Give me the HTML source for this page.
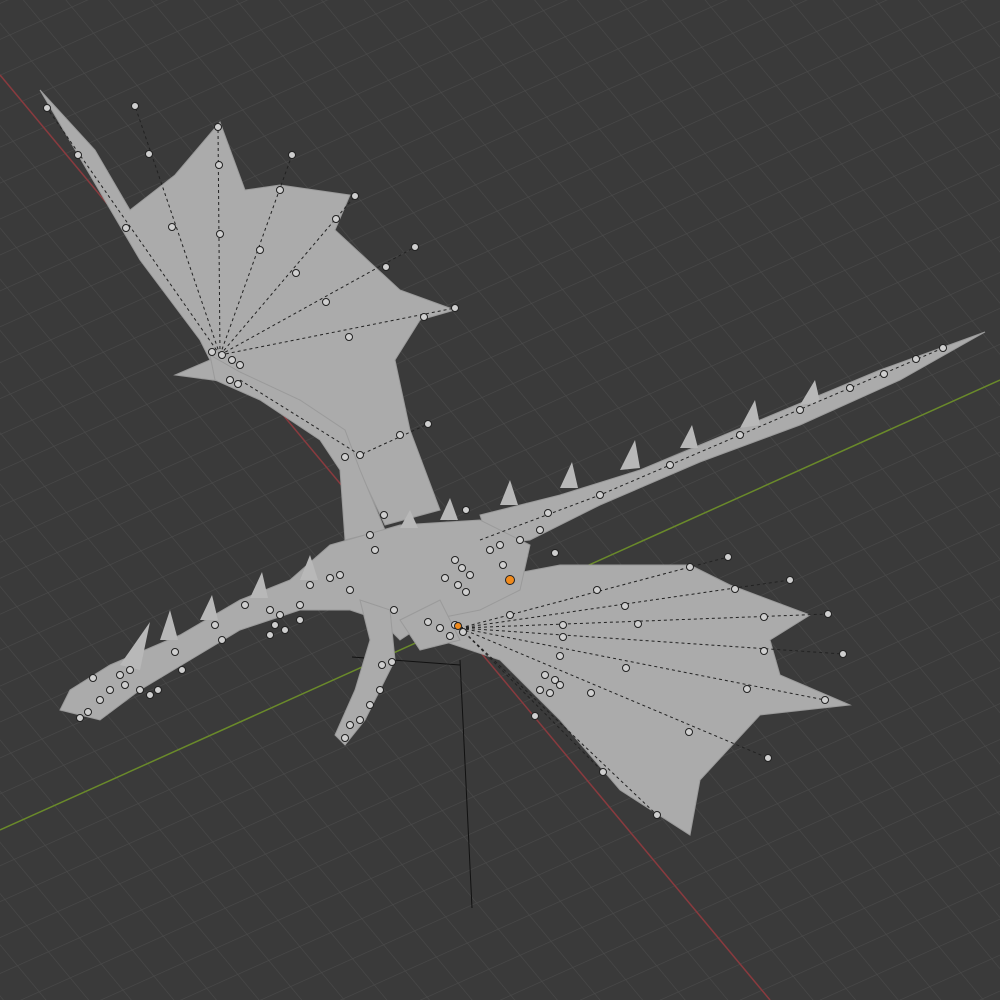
<!DOCTYPE html>
<html><head><meta charset="utf-8"><style>
html,body{margin:0;padding:0;background:#3a3a3a;width:1000px;height:1000px;overflow:hidden}
</style></head><body>
<svg width="1000" height="1000" viewBox="0 0 1000 1000" xmlns="http://www.w3.org/2000/svg">
<defs>
<pattern id="g" width="34" height="34" patternUnits="userSpaceOnUse" patternTransform="matrix(0.912,-0.41,0.64,0.769,457,624)">
<path d="M0 0H34M0 0V34" stroke="#4a4a4a" stroke-width="1.3" fill="none"/>
</pattern>
</defs>
<rect width="1000" height="1000" fill="#3a3a3a"/>
<rect width="1000" height="1000" fill="url(#g)"/>
<line x1="0" y1="75" x2="770" y2="1000" stroke="#8a3a3e" stroke-width="1.5"/>
<line x1="0" y1="830" x2="1000" y2="380" stroke="#6a8a2a" stroke-width="1.5"/>
<line x1="460" y1="660" x2="472" y2="908" stroke="#111" stroke-width="1"/>
<line x1="352" y1="657" x2="460" y2="665" stroke="#111" stroke-width="1"/>
<g fill="#ababab" stroke="#9a9a9a" stroke-width="1">
<polygon points="40,90 95,150 130,210 175,175 220,122 245,190 280,185 350,195 335,230 400,290 455,310 420,320 395,360 410,430 440,510 385,525 345,440 300,400 250,385 175,375 210,360 200,340 140,260"/>
<polygon points="210,355 240,372 300,400 345,430 360,470 385,530 345,540 340,470 320,440 260,400 215,380"/>
<polygon points="430,615 480,580 560,565 690,565 730,585 810,615 770,640 780,675 850,705 760,715 700,780 690,835 620,790 560,720 500,660 440,640"/>
<polygon points="480,515 560,495 640,470 760,420 880,370 985,332 900,380 800,425 700,462 600,505 530,540 490,545"/>
<polygon points="330,545 400,525 480,520 530,545 520,590 480,610 430,620 400,640 380,620 350,610 300,610 240,630 190,660 140,690 100,720 60,710 70,690 110,665 180,635 240,600 290,580"/>
<polygon points="360,600 390,610 395,660 365,720 345,745 335,735 355,690 370,640"/>
<polygon points="400,620 440,600 460,640 420,650"/>
</g>
<g fill="#b8b8b8">
<polygon points="400,528 410,510 418,528"/><polygon points="440,520 450,498 458,520"/><polygon points="500,505 510,480 518,505"/><polygon points="560,488 572,462 578,488"/><polygon points="620,470 635,440 640,468"/><polygon points="680,448 692,425 698,448"/><polygon points="740,428 755,400 760,425"/><polygon points="800,405 815,380 820,402"/>
<polygon points="160,640 170,610 178,640"/><polygon points="200,620 212,595 218,620"/><polygon points="250,598 262,572 268,598"/><polygon points="300,580 310,555 318,580"/><polygon points="120,665 150,622 140,670"/>
</g>
<g stroke="#222" stroke-width="1" stroke-dasharray="3,3" fill="none">
<path d="M220,355 L47,108 M220,355 L135,106 M220,355 L218,127 M220,355 L292,155 M220,355 L355,196 M220,355 L415,247 M220,355 L455,308 M240,380 L360,455 L428,424"/>
<path d="M460,628 L690,567 M460,628 L728,557 M460,628 L790,580 M460,628 L828,614 M460,628 L843,654 M460,628 L825,700 M460,628 L768,758 M460,628 L657,815 M460,628 L603,772"/>
<path d="M480,540 L600,495 L740,435 L850,388 L943,348"/>
</g>
<g fill="#cfcfcf" stroke="#222" stroke-width="1">
<circle cx="47" cy="108" r="3.5"/><circle cx="78" cy="155" r="3.5"/><circle cx="126" cy="228" r="3.5"/><circle cx="135" cy="106" r="3.5"/><circle cx="149" cy="154" r="3.5"/><circle cx="172" cy="227" r="3.5"/><circle cx="218" cy="127" r="3.5"/><circle cx="219" cy="165" r="3.5"/><circle cx="220" cy="234" r="3.5"/><circle cx="292" cy="155" r="3.5"/><circle cx="280" cy="190" r="3.5"/><circle cx="260" cy="250" r="3.5"/><circle cx="355" cy="196" r="3.5"/><circle cx="336" cy="219" r="3.5"/><circle cx="296" cy="273" r="3.5"/><circle cx="415" cy="247" r="3.5"/><circle cx="386" cy="267" r="3.5"/><circle cx="326" cy="302" r="3.5"/><circle cx="455" cy="308" r="3.5"/><circle cx="424" cy="317" r="3.5"/><circle cx="349" cy="337" r="3.5"/><circle cx="212" cy="352" r="3.5"/><circle cx="222" cy="355" r="3.5"/><circle cx="232" cy="360" r="3.5"/><circle cx="240" cy="365" r="3.5"/><circle cx="230" cy="380" r="3.5"/><circle cx="238" cy="384" r="3.5"/><circle cx="428" cy="424" r="3.5"/><circle cx="400" cy="435" r="3.5"/><circle cx="360" cy="455" r="3.5"/><circle cx="345" cy="457" r="3.5"/>
<circle cx="943" cy="348" r="3.5"/><circle cx="916" cy="359" r="3.5"/><circle cx="884" cy="374" r="3.5"/><circle cx="850" cy="388" r="3.5"/><circle cx="800" cy="410" r="3.5"/><circle cx="740" cy="435" r="3.5"/><circle cx="670" cy="465" r="3.5"/><circle cx="600" cy="495" r="3.5"/><circle cx="548" cy="513" r="3.5"/><circle cx="540" cy="530" r="3.5"/><circle cx="466" cy="510" r="3.5"/><circle cx="384" cy="515" r="3.5"/><circle cx="370" cy="535" r="3.5"/><circle cx="375" cy="550" r="3.5"/>
<circle cx="455" cy="560" r="3.5"/><circle cx="462" cy="568" r="3.5"/><circle cx="470" cy="575" r="3.5"/><circle cx="445" cy="578" r="3.5"/><circle cx="458" cy="585" r="3.5"/><circle cx="466" cy="592" r="3.5"/><circle cx="490" cy="550" r="3.5"/><circle cx="500" cy="545" r="3.5"/><circle cx="503" cy="565" r="3.5"/><circle cx="520" cy="540" r="3.5"/><circle cx="555" cy="553" r="3.5"/>
<circle cx="690" cy="567" r="3.5"/><circle cx="728" cy="557" r="3.5"/><circle cx="790" cy="580" r="3.5"/><circle cx="735" cy="589" r="3.5"/><circle cx="828" cy="614" r="3.5"/><circle cx="764" cy="617" r="3.5"/><circle cx="843" cy="654" r="3.5"/><circle cx="764" cy="651" r="3.5"/><circle cx="825" cy="700" r="3.5"/><circle cx="747" cy="689" r="3.5"/><circle cx="768" cy="758" r="3.5"/><circle cx="689" cy="732" r="3.5"/><circle cx="657" cy="815" r="3.5"/><circle cx="603" cy="772" r="3.5"/><circle cx="535" cy="716" r="3.5"/><circle cx="597" cy="590" r="3.5"/><circle cx="625" cy="606" r="3.5"/><circle cx="638" cy="624" r="3.5"/><circle cx="563" cy="625" r="3.5"/><circle cx="563" cy="637" r="3.5"/><circle cx="560" cy="656" r="3.5"/><circle cx="626" cy="668" r="3.5"/><circle cx="591" cy="693" r="3.5"/><circle cx="510" cy="615" r="3.5"/>
<circle cx="545" cy="675" r="3.5"/><circle cx="555" cy="680" r="3.5"/><circle cx="540" cy="690" r="3.5"/><circle cx="550" cy="693" r="3.5"/><circle cx="560" cy="685" r="3.5"/>
<circle cx="440" cy="628" r="3.5"/><circle cx="450" cy="636" r="3.5"/><circle cx="455" cy="625" r="3.5"/><circle cx="463" cy="632" r="3.5"/><circle cx="428" cy="622" r="3.5"/>
<circle cx="270" cy="610" r="3.5"/><circle cx="280" cy="615" r="3.5"/><circle cx="275" cy="625" r="3.5"/><circle cx="285" cy="630" r="3.5"/><circle cx="270" cy="635" r="3.5"/><circle cx="300" cy="605" r="3.5"/><circle cx="300" cy="620" r="3.5"/><circle cx="245" cy="605" r="3.5"/><circle cx="215" cy="625" r="3.5"/><circle cx="222" cy="640" r="3.5"/><circle cx="175" cy="652" r="3.5"/><circle cx="182" cy="670" r="3.5"/><circle cx="310" cy="585" r="3.5"/><circle cx="330" cy="578" r="3.5"/><circle cx="340" cy="575" r="3.5"/><circle cx="350" cy="590" r="3.5"/><circle cx="394" cy="610" r="3.5"/>
<circle cx="120" cy="675" r="3.5"/><circle cx="130" cy="670" r="3.5"/><circle cx="125" cy="685" r="3.5"/><circle cx="140" cy="690" r="3.5"/><circle cx="150" cy="695" r="3.5"/><circle cx="158" cy="690" r="3.5"/><circle cx="110" cy="690" r="3.5"/><circle cx="100" cy="700" r="3.5"/><circle cx="93" cy="678" r="3.5"/><circle cx="88" cy="712" r="3.5"/><circle cx="80" cy="718" r="3.5"/>
<circle cx="350" cy="725" r="3.5"/><circle cx="360" cy="720" r="3.5"/><circle cx="345" cy="738" r="3.5"/><circle cx="370" cy="705" r="3.5"/><circle cx="380" cy="690" r="3.5"/><circle cx="382" cy="665" r="3.5"/><circle cx="392" cy="662" r="3.5"/>
</g>
<circle cx="510" cy="580" r="4.5" fill="#f08a1c" stroke="#222"/>
<circle cx="458" cy="626" r="3.5" fill="#f08a1c" stroke="#222"/>
</svg>
</body></html>
